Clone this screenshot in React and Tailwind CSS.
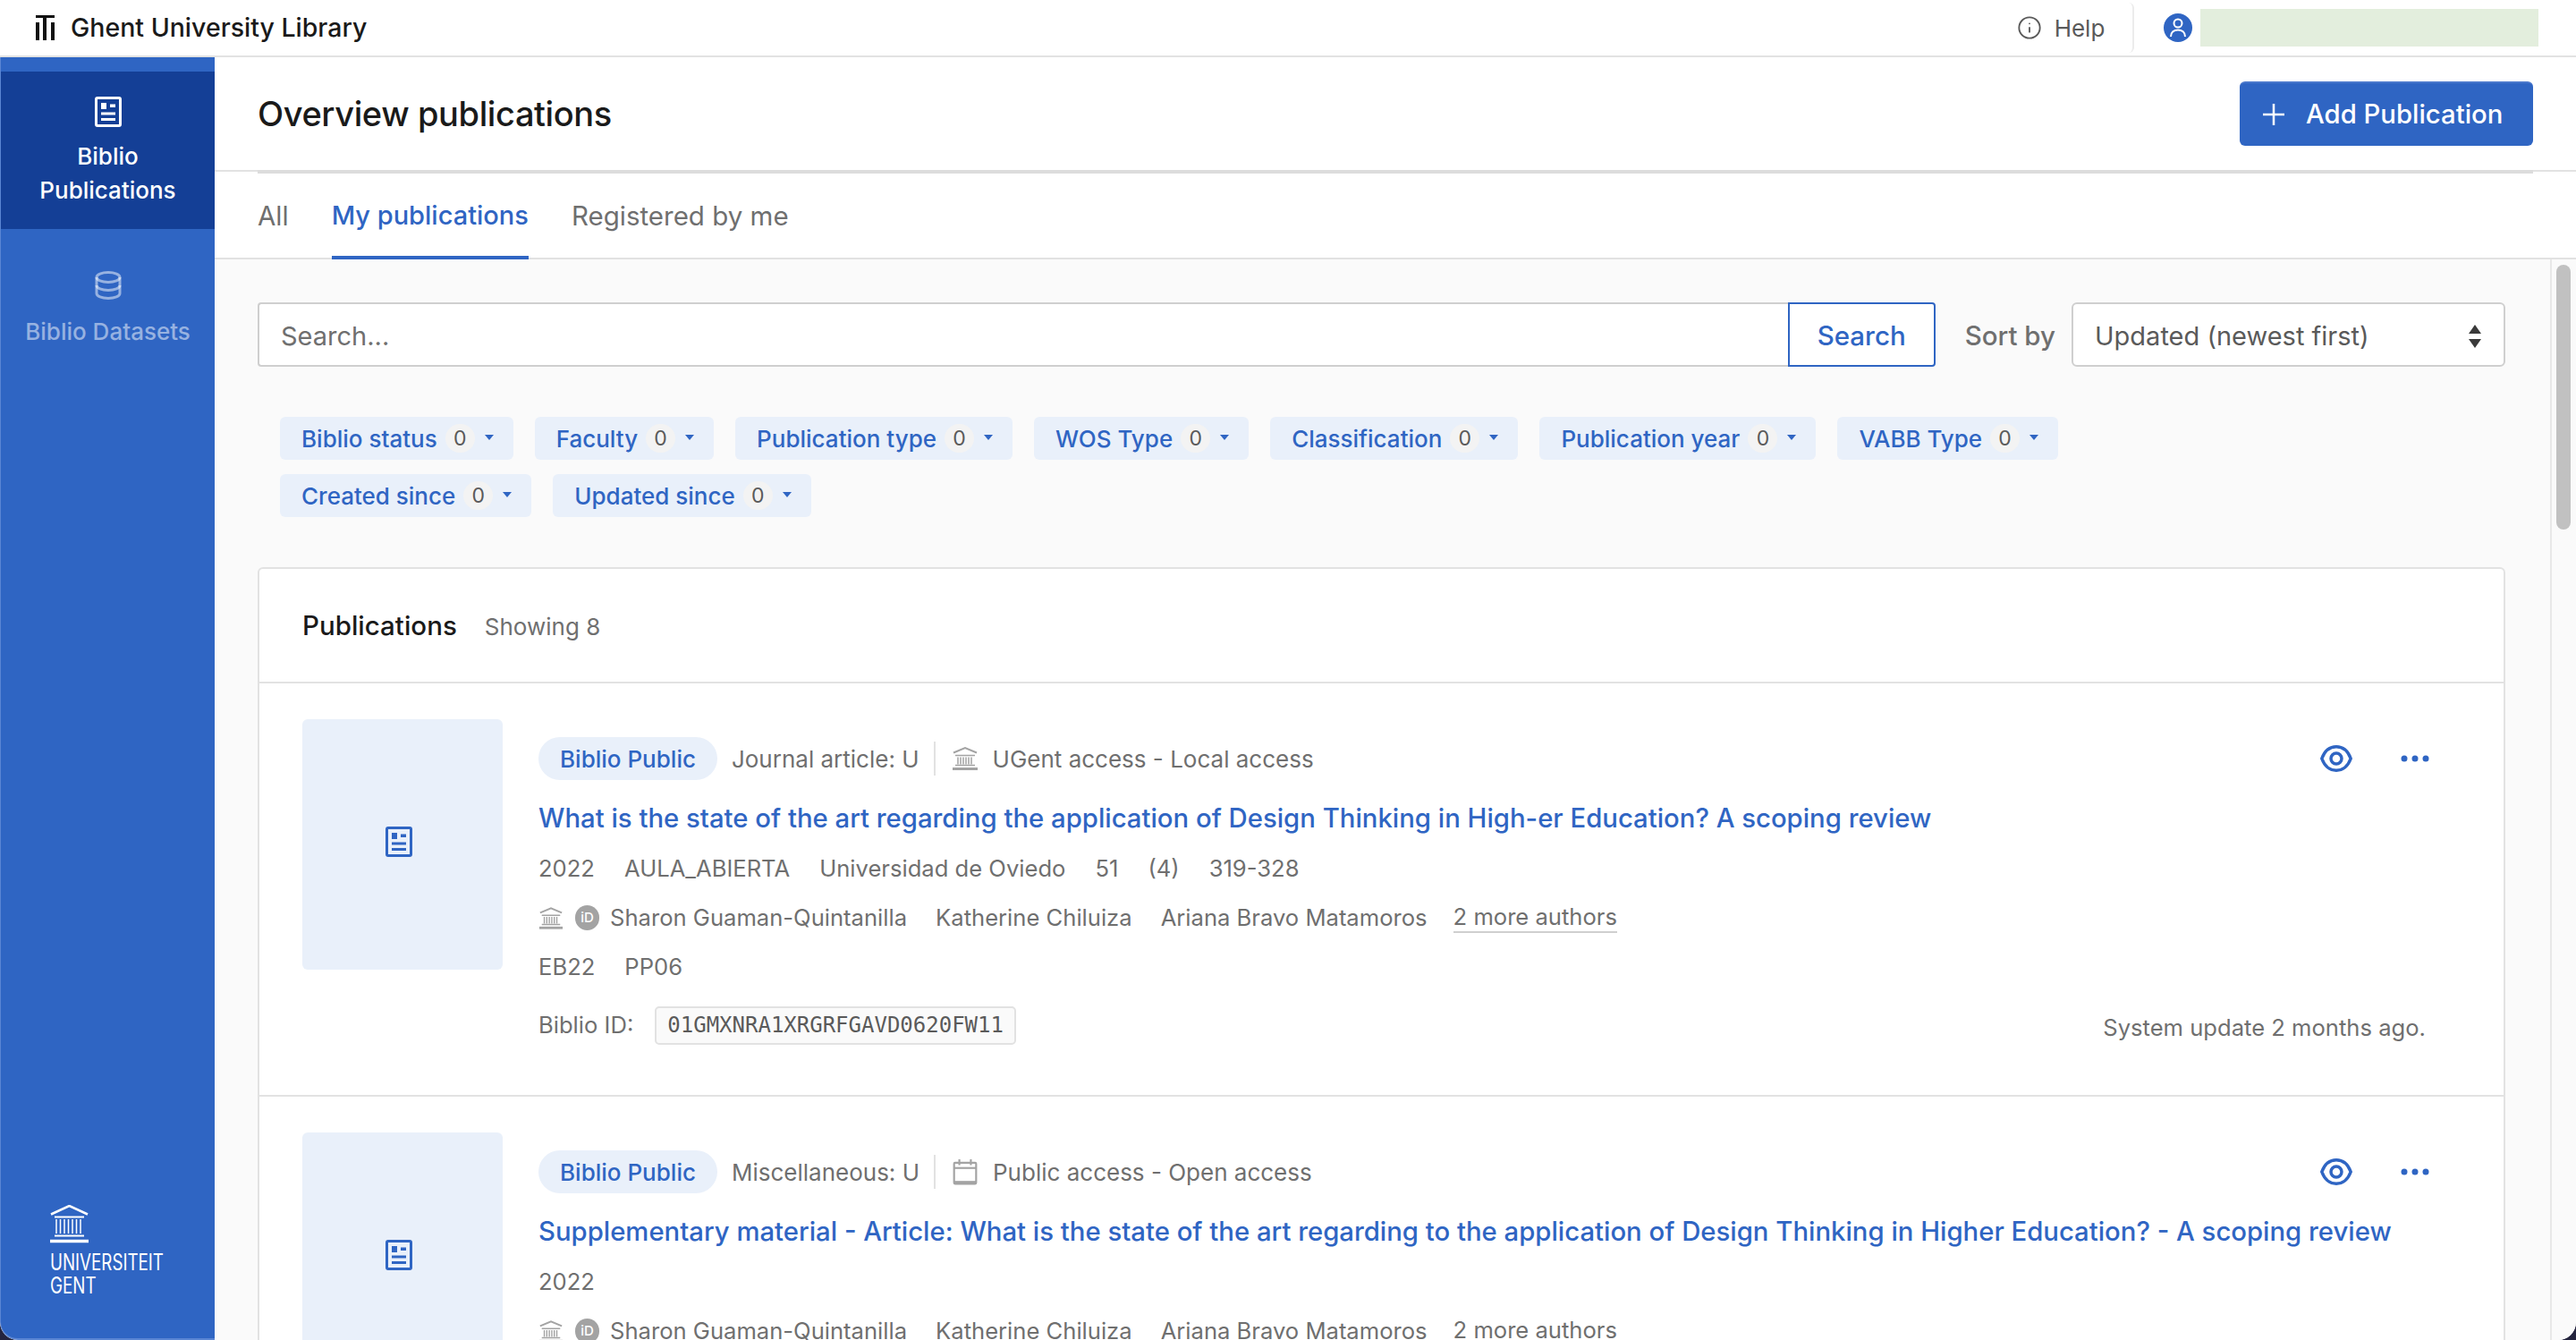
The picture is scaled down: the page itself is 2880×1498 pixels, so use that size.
import React from "react";
import { Info } from "lucide-react";

const FONT = { fontFamily: "Inter, 'Noto Sans', sans-serif" };

function DocIcon({ className }) {
    return (
        <svg viewBox="0 0 30 34" className={className} fill="none">
            <rect x="1.5" y="1.5" width="27" height="31" rx="1.5" stroke="currentColor" strokeWidth="3" />
            <rect x="7" y="7" width="6" height="7" fill="currentColor" />
            <rect x="17" y="8.5" width="6" height="3.5" fill="currentColor" />
            <rect x="7" y="17.5" width="16" height="3" fill="currentColor" />
            <rect x="7" y="24" width="16" height="3" fill="currentColor" />
        </svg>
    );
}

function DbIcon({ className }) {
    return (
        <svg viewBox="0 0 30 32" className={className} fill="none" stroke="currentColor" strokeWidth="3">
            <ellipse cx="15" cy="7" rx="13" ry="5.5" />
            <path d="M2 7v18c0 3.200 5.800 5.500 13 5.500s13-2.300 13-5.500V7" />
            <path d="M2 16c0 3.200 5.800 5.500 13 5.500s13-2.300 13-5.500" />
        </svg>
    );
}

function BankIcon({ className }) {
    return (
        <svg viewBox="0 0 30 28" className={className} fill="none" stroke="currentColor">
            <path d="M2 7.500 15 2l13 5.500" strokeWidth="2" />
            <path d="M4 10.500h22M4 21.500h22" strokeWidth="1.500" />
            <path d="M7 12.500v8M10 12.500v8M13 12.500v8M16 12.500v8M19 12.500v8M22 12.500v8" strokeWidth="1.500" />
            <path d="M1 25.500h28" strokeWidth="3" />
        </svg>
    );
}

function CalendarIcon({ className }) {
    return (
        <svg viewBox="0 0 26 28" className={className} fill="none" stroke="currentColor">
            <rect x="1.500" y="4.500" width="23" height="22" rx="1" strokeWidth="2" />
            <path d="M1.500 10h23" strokeWidth="2" />
            <path d="M7 1v6M19 1v6" strokeWidth="2" />
            <path d="M1.500 25h23" strokeWidth="3" />
        </svg>
    );
}

function EyeIcon({ className }) {
    return (
        <svg viewBox="0 0 36 30" className={className} fill="none" stroke="currentColor" strokeWidth="3.500">
            <path d="M1.800 15C5 6.500 11 1.800 18 1.800S31 6.500 34.200 15C31 23.500 25 28.200 18 28.200S5 23.500 1.800 15Z" />
            <circle cx="18" cy="15" r="6" />
        </svg>
    );
}

function LogoIcon({ className }) {
    return (
        <svg viewBox="0 0 21 28" className={className} fill="#111">
            <rect x="0" y="0" width="21" height="3" />
            <rect x="0" y="8" width="4" height="20" />
            <rect x="8" y="3" width="4" height="25" />
            <rect x="17" y="8" width="4" height="20" />
        </svg>
    );
}

function UgentIcon({ className }) {
    return (
        <svg viewBox="0 0 43 43" className={className} fill="none" stroke="#fff">
            <path d="M1 10.500 21.500 1 42 10.500" strokeWidth="2.500" />
            <path d="M5 13.500h33M5 34.500h33" strokeWidth="2" />
            <path d="M7 16v16M11.500 16v16M16 16v16M20.500 16v16M25 16v16M29.500 16v16M34 16v16" strokeWidth="1.500" />
            <path d="M0 40.500h43" strokeWidth="3.500" />
        </svg>
    );
}

function OrcidIcon() {
    return (
        <span className="w-[27px] h-[28px] rounded-full bg-[#a3a3a3] flex items-center justify-center text-white text-[15px] font-medium shrink-0">iD</span>
    );
}

function FilterChip({ label }) {
    return (
        <div className="h-[48px] flex items-center pl-[24px] pr-[22px] bg-[#e9f0fa] rounded-[6px]">
            <span className="text-[#2f65c3] text-[26px] font-medium">{label}</span>
            <span className="ml-[9px] w-[33px] h-[32px] rounded-full bg-[#f3f3f3] flex items-center justify-center text-[#5a5a5a] text-[23px]">0</span>
            <span className="ml-[11px] mb-[2px] w-0 h-0 border-x-[5px] border-x-transparent border-t-[6px] border-t-[#2f65c3]" />
        </div>
    );
}

function Authors() {
    return (
        <div className="mt-[15px] h-[40px] flex items-center text-[25.6px] text-[#6f6f6f] leading-[40px]">
            <BankIcon className="w-[28px] h-[27px] text-[#a3a3a3] mr-[13px]" />
            <OrcidIcon />
            <span className="ml-[12px]">Sharon Guaman-Quintanilla</span>
            <span className="ml-[32px]">Katherine Chiluiza</span>
            <span className="ml-[32px]">Ariana Bravo Matamoros</span>
            <span className="ml-[29px] leading-[32px] border-b-2 border-[#cfcfcf]">2 more authors</span>
        </div>
    );
}

function PublicationRow({ type, accessIcon, access, title, meta, extras, last }) {
    return (
        <div className={"flex pl-[48px] pr-[83px] pt-[40px] h-[462px] " + (last ? "" : "border-b-2 border-[#e2e2e2]")}>
            <div className="w-[224px] h-[280px] shrink-0 rounded-[6px] bg-[#e9f0fa] flex items-center justify-center pr-[8px] pb-[7px]">
                <DocIcon className="w-[30px] h-[34px] text-[#2f65c3]" />
            </div>
            <div className="ml-[40px] flex-1 min-w-0 pt-[20px]">
                <div className="flex items-center h-[48px]">
                    <span className="h-[48px] px-[24px] rounded-full bg-[#e9f0fa] text-[#2f65c3] text-[26px] font-medium flex items-center">Biblio Public</span>
                    <span className="ml-[16px] text-[26px] text-[#6f6f6f]">{type}</span>
                    <span className="ml-[16px] w-[2px] h-[38px] bg-[#e2e2e2]" />
                    <span className="ml-[18px] w-[30px] flex justify-center text-[#a3a3a3]">{accessIcon}</span>
                    <span className="ml-[16px] text-[26px] text-[#6f6f6f]">{access}</span>
                    <div className="ml-auto flex items-center gap-[54px] text-[#2f65c3]">
                        <EyeIcon className="w-[36px] h-[30px]" />
                        <svg viewBox="0 0 32 8" className="w-[32px] h-[8px]" fill="currentColor">
                            <circle cx="4" cy="4" r="3.500" />
                            <circle cx="16" cy="4" r="3.500" />
                            <circle cx="28" cy="4" r="3.500" />
                        </svg>
                    </div>
                </div>
                <div className="mt-[21px] text-[29.3px] leading-[44px] font-medium text-[#2f65c3] whitespace-nowrap">{title}</div>
                <div className="mt-[14px] h-[40px] flex items-center gap-[33px] text-[25.6px] text-[#6f6f6f]">
                    {meta.map((m) => (
                        <span key={m}>{m}</span>
                    ))}
                </div>
                <Authors />
                {extras && (
                    <>
                        <div className="mt-[15px] h-[40px] flex items-center gap-[33px] text-[25.6px] text-[#6f6f6f]">
                            <span>EB22</span>
                            <span>PP06</span>
                        </div>
                        <div className="mt-[23px] flex items-center text-[25.6px] text-[#6f6f6f]">
                            <span>Biblio ID:</span>
                            <span
                                className="ml-[24px] h-[43px] px-[12px] flex items-center rounded-[5px] border-2 border-[#e2e2e2] bg-[#fafafa] text-[24px] text-[#5a5a5a]"
                                style={{ fontFamily: "'DejaVu Sans Mono', monospace" }}
                            >
                                01GMXNRA1XRGRFGAVD0620FW11
                            </span>
                            <span className="ml-auto mt-[6px] mr-[4px]">System update 2 months ago.</span>
                        </div>
                    </>
                )}
            </div>
        </div>
    );
}

export default function App() {
    const filtersTop = ["Biblio status", "Faculty", "Publication type", "WOS Type", "Classification", "Publication year", "VABB Type"];
    const filtersBottom = ["Created since", "Updated since"];

    return (
        <div className="h-[1498px] bg-[#24243e] overflow-hidden" style={FONT}>
            <div className="h-full bg-white rounded-b-[20px] overflow-hidden flex flex-col">
                {/* top bar */}
                <header className="h-[64px] shrink-0 flex items-center border-b-2 border-[#e2e2e2] pl-[40px] pr-[42px]">
                    <LogoIcon className="w-[21px] h-[28px]" />
                    <span className="ml-[18px] text-[28.5px] font-medium text-[#1a1a1a]">Ghent University Library</span>
                    <div className="ml-auto h-[56px] w-[162px] flex items-center justify-center gap-[14px] rounded-[6px] border-r-2 border-[#ececec] text-[#5a5a5a] text-[26px]">
                        <Info className="w-[28px] h-[28px]" strokeWidth={1.6} />
                        <span>Help</span>
                    </div>
                    <div className="ml-[33px] w-[32px] h-[32px] rounded-full bg-[#2f65c3] flex items-center justify-center">
                        <svg viewBox="0 0 20 22" className="w-[20px] h-[22px]" fill="none" stroke="#fff" strokeWidth="2">
                            <circle cx="10" cy="6" r="4.500" />
                            <path d="M2 21c0-5 3.500-7.500 8-7.500s8 2.500 8 7.500" />
                        </svg>
                    </div>
                    <div className="ml-[9px] w-[378px] h-[42px] bg-[#e3eedd]" />
                </header>

                <div className="flex-1 min-h-0 flex">
                    {/* sidebar */}
                    <aside className="w-[240px] shrink-0 bg-[#2f65c3] border-l border-b-2 border-[#5a85d3] rounded-bl-[20px] pt-[16px] flex flex-col">
                        <div className="h-[176px] bg-[#143f96] flex flex-col items-center pt-[28px] text-white">
                            <DocIcon className="w-[30px] h-[34px]" />
                            <div className="mt-[14px] text-[26px] leading-[38px] font-medium text-center">
                                Biblio
                                <br />
                                Publications
                            </div>
                        </div>
                        <div className="pt-[47px] flex flex-col items-center text-white/50">
                            <DbIcon className="w-[30px] h-[32px]" />
                            <div className="mt-[17px] text-[26px] leading-[38px] font-medium">Biblio Datasets</div>
                        </div>
                        <div className="mt-auto pl-[55px] pb-[46px] text-white">
                            <UgentIcon className="w-[43px] h-[43px]" />
                            <div className="mt-[8px] w-[126px] origin-left scale-x-[0.75] whitespace-nowrap text-[25px] leading-[26px]">
                                UNIVERSITEIT
                                <br />
                                GENT
                            </div>
                        </div>
                    </aside>

                    <main className="flex-1 min-w-0 flex flex-col">
                        {/* title bar */}
                        <div className="h-[128px] shrink-0 border-b-2 border-[#e2e2e2] px-[48px]">
                            <div className="h-[130px] flex items-center justify-between border-b-4 border-[#dcdcdc]">
                                <h1 className="text-[38px] tracking-[-0.4px] font-medium text-[#1a1a1a]">Overview publications</h1>
                                <button className="w-[328px] h-[72px] rounded-[6px] bg-[#2f65c3] border-t-2 border-[#4a78cc] flex items-center pl-[26px] text-white text-[29.3px] font-medium">
                                    <svg viewBox="0 0 24 24" className="w-[24px] h-[24px]" fill="none" stroke="#fff" strokeWidth="2.500">
                                        <path d="M12 0v24M0 12h24" />
                                    </svg>
                                    <span className="ml-[24px]">Add Publication</span>
                                </button>
                            </div>
                        </div>

                        {/* tabs */}
                        <div className="h-[98px] shrink-0 flex px-[48px] border-b-2 border-[#e2e2e2] text-[29.5px] text-[#6f6f6f]">
                            <div className="h-[98px] pt-[4px] flex items-center border-b-4 border-transparent">All</div>
                            <div className="ml-[48px] h-[98px] pt-[4px] flex items-center border-b-4 border-[#2f65c3] text-[#2f65c3] text-[29px] font-medium">My publications</div>
                            <div className="ml-[48px] h-[98px] pt-[4px] flex items-center border-b-4 border-transparent">Registered by me</div>
                        </div>

                        <div className="flex-1 min-h-0 flex bg-[#fafafa]">
                            <div className="flex-1 min-w-0 overflow-hidden pl-[48px] pr-[50px] pt-[48px]">
                                {/* search */}
                                <div className="flex items-center h-[72px]">
                                    <div className="flex-1 h-full bg-white border-2 border-r-0 border-[#cfcfcf] rounded-l-[4px] flex items-center pl-[24px] pt-[3px] text-[29px] text-[#6f6f6f]">Search...</div>
                                    <button className="w-[165px] h-full pt-[3px] bg-white border-2 border-[#2f65c3] rounded-r-[4px] text-[#2f65c3] text-[29.5px] font-medium">Search</button>
                                    <span className="ml-[33px] mt-[3px] text-[29.5px] font-medium text-[#6f6f6f]">Sort by</span>
                                    <div className="ml-[18px] w-[485px] h-full bg-white border-2 border-[#cfcfcf] rounded-[6px] flex items-center justify-between pl-[24px] pr-[24px] pt-[3px] text-[29px] text-[#5a5a5a]">
                                        <span>Updated (newest first)</span>
                                        <svg viewBox="0 0 16 28" className="w-[16px] h-[28px]" fill="#3a3a3a">
                                            <path d="M8 1 15 11H1ZM1 17h14L8 27Z" />
                                        </svg>
                                    </div>
                                </div>

                                {/* filters */}
                                <div className="mt-[56px] pl-[25px] flex flex-col gap-[16px]">
                                    <div className="flex gap-[24px]">
                                        {filtersTop.map((f) => (
                                            <FilterChip key={f} label={f} />
                                        ))}
                                    </div>
                                    <div className="flex gap-[24px]">
                                        {filtersBottom.map((f) => (
                                            <FilterChip key={f} label={f} />
                                        ))}
                                    </div>
                                </div>

                                {/* publications card */}
                                <div className="mt-[56px] bg-white border-2 border-[#e2e2e2] rounded-t-[6px]">
                                    <div className="h-[128px] flex items-center border-b-2 border-[#e2e2e2] pl-[48px]">
                                        <h2 className="text-[29.5px] font-medium text-[#1a1a1a]">Publications</h2>
                                        <span className="ml-[31px] mt-[2px] text-[26px] text-[#6f6f6f]">Showing 8</span>
                                    </div>
                                    <PublicationRow
                                        type="Journal article: U"
                                        accessIcon={<BankIcon className="w-[30px] h-[28px]" />}
                                        access="UGent access - Local access"
                                        title="What is the state of the art regarding the application of Design Thinking in High-er Education? A scoping review"
                                        meta={["2022", "AULA_ABIERTA", "Universidad de Oviedo", "51", "(4)", "319-328"]}
                                        extras
                                    />
                                    <PublicationRow
                                        type="Miscellaneous: U"
                                        accessIcon={<CalendarIcon className="w-[28px] h-[30px]" />}
                                        access="Public access - Open access"
                                        title="Supplementary material - Article: What is the state of the art regarding to the application of Design Thinking in Higher Education? - A scoping review"
                                        meta={["2022"]}
                                        last
                                    />
                                </div>
                            </div>

                            {/* scrollbar */}
                            <div className="w-[29px] shrink-0 border-l-2 border-[#e8e8e8] pt-[6px] pl-[5px]">
                                <div className="w-[16px] h-[296px] rounded-full bg-[#c1c1c1]" />
                            </div>
                        </div>
                    </main>
                </div>
            </div>
        </div>
    );
}
